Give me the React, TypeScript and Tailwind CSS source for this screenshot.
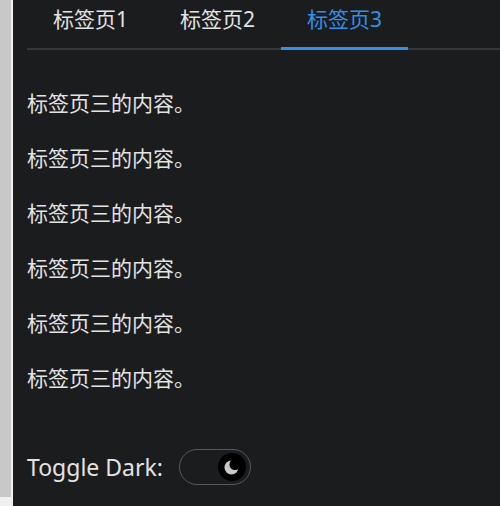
import React from "react";

function Moon() {
  return (
    <svg width="15" height="15" viewBox="0 0 15 15">
      <defs>
        <mask id="m">
          <rect width="15" height="15" fill="white" />
          <circle cx="11" cy="4.5" r="5.6" fill="black" />
        </mask>
      </defs>
      <circle cx="7.5" cy="7.5" r="7" fill="#c9c9c9" mask="url(#m)" />
    </svg>
  );
}

export default function App() {
  const tabs = ["标签页1", "标签页2", "标签页3"];
  return (
    <div
      className="flex h-[506px] w-[500px] overflow-hidden bg-[#f0f0f0] [font-family:'Noto_Sans','Noto_Sans_CJK_SC',sans-serif]"
    >
      <div className="w-[13px] shrink-0">
        <div className="h-[497px] w-[11px] bg-[#c8c8c8]" />
      </div>
      <div className="flex-1 bg-[#1b1c1e] pl-[14px] text-[#e3e3e3]">
        <div className="flex h-[50px] border-b-2 border-[#36373a]">
          {tabs.map((t, i) => (
            <div
              key={t}
              className={
                "relative flex h-[48px] w-[127px] items-center justify-center text-[21px] " +
                (i === 2 ? "text-[#3290ea]" : "text-[#e3e3e3]")
              }
            >
              <span className="-mt-[8px]">{t}</span>
              {i === 2 && (
                <div className="absolute bottom-[-2px] left-0 right-0 h-[3px] bg-[#3290ea]" />
              )}
            </div>
          ))}
        </div>
        <div className="flex flex-col gap-[25px] pt-[38px] text-[21px] leading-[30px]">
          {Array.from({ length: 6 }).map((_, i) => (
            <p key={i}>标签页三的内容。</p>
          ))}
        </div>
        <div className="mt-[56px] flex h-[36px] items-center gap-[16px]">
          <span className="text-[23px] leading-[36px] text-[#e3e3e3]">Toggle Dark:</span>
          <div className="flex h-[36px] w-[72px] items-center justify-end rounded-full border border-[#58595c] pr-[4px]">
            <div className="flex h-[28px] w-[28px] items-center justify-center rounded-full bg-black">
              <Moon />
            </div>
          </div>
        </div>
      </div>
    </div>
  );
}
